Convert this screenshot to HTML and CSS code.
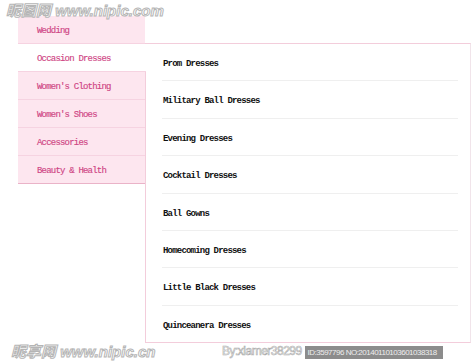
FILE: index.html
```html
<!DOCTYPE html>
<html lang="en">
<head>
    <meta charset="UTF-8">
    <meta name="viewport" content="width=device-width, initial-scale=1.0">
    <title>Dresses</title>
    <link rel="stylesheet" href="styles.css">
</head>
<body>
    <div class="wrap">
        <ul class="menu">
            <li><a href="javascript:;">Wedding</a></li>
            <li class="active"><a href="javascript:;">Occasion Dresses</a></li>
            <li><a href="javascript:;">Women's Clothing</a></li>
            <li><a href="javascript:;">Women's Shoes</a></li>
            <li><a href="javascript:;">Accessories</a></li>
            <li><a href="javascript:;">Beauty &amp; Health</a></li>
        </ul>
        <ul class="panel">
            <li><a href="javascript:;">Prom Dresses</a></li>
            <li><a href="javascript:;">Military Ball Dresses</a></li>
            <li><a href="javascript:;">Evening Dresses</a></li>
            <li><a href="javascript:;">Cocktail Dresses</a></li>
            <li><a href="javascript:;">Ball Gowns</a></li>
            <li><a href="javascript:;">Homecoming Dresses</a></li>
            <li><a href="javascript:;">Little Black Dresses</a></li>
            <li><a href="javascript:;">Quinceanera Dresses</a></li>
        </ul>
    </div>

    <!-- 水印 -->
    <div class="mark mark-top">昵图网 www.nipic.com</div>
    <div class="mark mark-bottom">昵享网 www.nipic.cn</div>
    <div class="mark-by">By:xiamer38299 <span>ID:3597796 NO:20140110103601038318</span></div>
</body>
</html>
```

FILE: styles.css
```css
*{
    margin: 0;
    padding: 0;
}
body{
    background-color: #fff;
    font-family: "Liberation Mono", "Noto Sans CJK SC", monospace;
    font-size: 9px;
    letter-spacing: -0.8px;
    position: relative;
    height: 362px;
    overflow: hidden;
}
ul{
    list-style: none;
}
a{
    text-decoration: none;
}
.wrap{
    display: flex;
    align-items: flex-start;
    padding: 16px 3px 0 18px;
}

/* 左侧菜单 */
.menu{
    width: 127px;
    flex-shrink: 0;
    border-bottom: 1px solid #eab3c8;
}
.menu li{
    height: 27px;
    line-height: 31px;
    overflow: hidden;
    padding-left: 19px;
    background-color: #fde6ef;
    border-bottom: 1px solid #f6d3e1;
}
.menu li:last-child{
    border-bottom: none;
}
.menu a{
    color: #cf4584;
    -webkit-text-stroke: 0.15px #cf4584;
}
.menu .active{
    background-color: #fff;
    margin-right: -1px;
    position: relative;
    z-index: 1;
}

/* 右侧列表 */
.panel{
    flex: 1;
    margin-top: 27px;
    height: 298px;
    border: 1px solid #f3cddb;
    border-right-color: #f1e4ea;
}
.panel li{
    margin: 0 12px 0 16px;
    padding-left: 1px;
    height: 36.4px;
    line-height: 40px;
    overflow: hidden;
    border-bottom: 1px solid #efefef;
}
.panel li:last-child{
    border-bottom: none;
}
.panel a{
    color: #111;
    font-weight: bold;
}

/* 水印 */
.mark{
    position: absolute;
    font-family: "Liberation Sans", "Noto Sans CJK SC", sans-serif;
    font-weight: bold;
    font-style: italic;
    letter-spacing: 0;
    line-height: 1;
    color: #fff;
    -webkit-text-stroke: 1px #b5b5b5;
}
.mark-top{
    left: 6px;
    top: 3px;
    font-size: 15px;
}
.mark-bottom{
    left: 11px;
    top: 344px;
    font-size: 15px;
}
.mark-by{
    position: absolute;
    left: 222px;
    top: 344px;
    font-family: "Liberation Sans", sans-serif;
    font-size: 12px;
    line-height: 14px;
    letter-spacing: -0.5px;
    color: #fff;
    -webkit-text-stroke: 0.6px #aaa;
}
.mark-by span{
    display: inline-block;
    font-size: 8px;
    color: #eee;
    -webkit-text-stroke: 0;
    background-color: #8c8c8c;
    padding: 0 6px 0 3px;
    line-height: 13px;
}
```
